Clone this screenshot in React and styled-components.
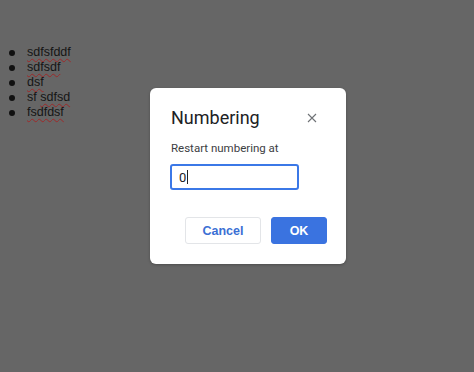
import React from 'react';
import styled, { createGlobalStyle } from 'styled-components';

const GlobalStyle = createGlobalStyle`
  html, body {
    margin: 0;
    padding: 0;
    background: #666666;
    font-family: Arial, 'Liberation Sans', sans-serif;
  }
`;

const Page = styled.div`
  position: relative;
  width: 100%;
  height: 100vh;
  background: #666666;
  overflow: hidden;
`;

const List = styled.ul`
  margin: 45px 0 0;
  padding-left: 27px;
  list-style: none;
  color: #151515;
  font-family: 'Liberation Sans', Arial, sans-serif;
  font-size: 12.5px;
  line-height: 15px;
`;

const Item = styled.li`
  position: relative;

  &::before {
    content: '';
    position: absolute;
    left: -18px;
    top: 5px;
    width: 6px;
    height: 6px;
    border-radius: 50%;
    background: #111;
  }
`;

const Misspelled = styled.span`
  text-decoration: underline wavy #9b2a2a;
  text-decoration-thickness: 1px;
  text-underline-offset: 2px;
`;

const Dialog = styled.div`
  position: absolute;
  left: 150px;
  top: 88px;
  width: 196px;
  height: 176px;
  box-sizing: border-box;
  padding: 18px 19px 20px 21px;
  background: #fff;
  border-radius: 6px;
  box-shadow: 0 1px 3px rgba(0, 0, 0, 0.25);
  display: flex;
  flex-direction: column;
  font-family: Roboto, 'Noto Sans', sans-serif;
`;

const Header = styled.div`
  display: flex;
  align-items: center;
  justify-content: space-between;
`;

const Title = styled.h2`
  margin: 0;
  font-size: 18px;
  line-height: 24px;
  font-weight: 400;
  color: #202124;
`;

const CloseButton = styled.button`
  border: none;
  background: none;
  padding: 0;
  margin-right: 8px;
  width: 14px;
  height: 14px;
  display: flex;
  align-items: center;
  justify-content: center;
  cursor: pointer;
`;

const Label = styled.label`
  margin-top: 11px;
  font-size: 11.5px;
  line-height: 15px;
  color: #3c4043;
`;

const Field = styled.div`
  margin-top: 8px;
  margin-left: -1px;
  width: 129px;
  height: 26px;
  box-sizing: border-box;
  border: 2px solid #3b78e7;
  border-radius: 3px;
  padding: 0 7px;
  display: flex;
  align-items: center;
  font-size: 13px;
  color: #202124;
`;

const Caret = styled.span`
  display: inline-block;
  width: 1px;
  height: 14px;
  margin-left: 1px;
  background: #202124;
`;

const Actions = styled.div`
  margin-top: auto;
  display: flex;
  justify-content: flex-end;
  gap: 10px;
`;

const Button = styled.button`
  height: 27px;
  width: ${(p) => p.$width}px;
  box-sizing: border-box;
  border-radius: 3px;
  font-family: 'Liberation Sans', Arial, sans-serif;
  font-size: 12.5px;
  font-weight: 700;
  cursor: pointer;
  border: 1px solid ${(p) => (p.$primary ? '#3a73e0' : '#e3e5e8')};
  background: ${(p) => (p.$primary ? '#3a73e0' : '#fff')};
  color: ${(p) => (p.$primary ? '#fff' : '#3b6fd4')};
`;

const items = [
  ['sdfsfddf'],
  ['sdfsdf'],
  ['dsf'],
  ['sf ', 'sdfsd'],
  ['fsdfdsf'],
];

const App = () => (
  <>
    <GlobalStyle />
    <Page>
      <List>
        {items.map((parts, i) => (
          <Item key={i}>
            {parts.length === 2 ? (
              <>
                {parts[0]}
                <Misspelled>{parts[1]}</Misspelled>
              </>
            ) : (
              <Misspelled>{parts[0]}</Misspelled>
            )}
          </Item>
        ))}
      </List>
      <Dialog>
        <Header>
          <Title>Numbering</Title>
          <CloseButton aria-label="Close">
            <svg width="10" height="10" viewBox="0 0 10 10">
              <path d="M1 1L9 9M9 1L1 9" stroke="#6f7276" strokeWidth="1.1" />
            </svg>
          </CloseButton>
        </Header>
        <Label>Restart numbering at</Label>
        <Field>
          0<Caret />
        </Field>
        <Actions>
          <Button $width={76}>Cancel</Button>
          <Button $width={56} $primary>OK</Button>
        </Actions>
      </Dialog>
    </Page>
  </>
);

export default App;
